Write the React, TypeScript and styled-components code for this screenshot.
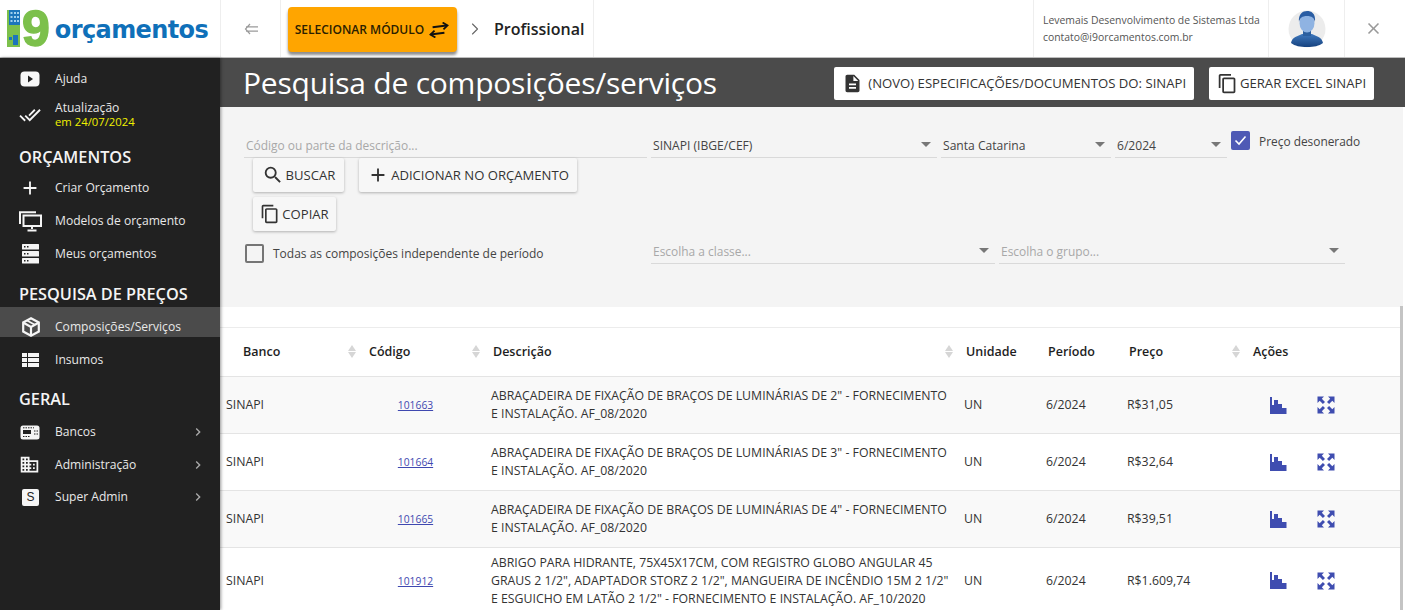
import styled, { createGlobalStyle } from 'styled-components'
import {
  MdAdd,
  MdChevronRight,
  MdClose,
  MdContentCopy,
  MdDescription,
  MdDomain,
  MdDoneAll,
  MdSearch,
} from 'react-icons/md'
import { ChevronRight } from 'lucide-react'

const GlobalStyle = createGlobalStyle`
  html, body {
    margin: 0;
    padding: 0;
    height: 100%;
    overflow: hidden;
    background: #fff;
    font-family: "Open Sans", "Noto Sans", sans-serif;
    color: #222;
  }
  * { box-sizing: border-box; }
`

const Page = styled.div`
  width: 1405px;
  height: 610px;
  display: flex;
  flex-direction: column;
  overflow: hidden;
`

/* topo */
const Header = styled.header`
  height: 58px;
  flex: none;
  display: flex;
  background: #fff;
  border-bottom: 1px solid #bdbdbd;
`
const LogoBox = styled.div`
  width: 221px;
  flex: none;
  display: flex;
  align-items: center;
  padding-left: 7px;
  border-right: 1px solid #eee;
  overflow: hidden;
`
const LogoNine = styled.span`
  font-family: 'Liberation Sans', sans-serif;
  font-weight: 700;
  font-size: 50px;
  line-height: 40px;
  color: #7cc04b;
  margin-left: 2px;
  -webkit-text-stroke: 1.5px #7cc04b;
`
const LogoText = styled.span`
  font-family: 'DejaVu Sans', sans-serif;
  font-weight: 700;
  font-size: 24px;
  letter-spacing: -0.6px;
  color: #0f70b9;
  margin: 2px 0 0 5px;
`
const BackBox = styled.div`
  width: 60px;
  height: 100%;
  flex: none;
  display: flex;
  align-items: center;
  justify-content: center;
  border-right: 1px solid #eee;
`
const ModuleButton = styled.div`
  width: 169px;
  height: 45px;
  margin: 7px 0 0 7px;
  flex: none;
  display: flex;
  align-items: center;
  justify-content: center;
  gap: 4px;
  background: #ffa500;
  border-radius: 4px;
  box-shadow: 0 3px 3px rgba(0, 0, 0, 0.45);
  font-size: 12px;
  font-weight: 600;
  color: #2a2000;
  white-space: nowrap;
`
const Crumb = styled.div`
  display: flex;
  align-items: center;
  height: 100%;
  width: 137px;
  flex: none;
  padding-left: 8px;
  gap: 9px;
  border-right: 1px solid #eee;
  color: #666;
  font-size: 16px;
  font-weight: 600;
`
const CrumbLabel = styled.span`
  color: #222;
`
const HeaderSpacer = styled.div`
  flex: 1;
`
const UserBox = styled.div`
  width: 236px;
  flex: none;
  display: flex;
  flex-direction: column;
  justify-content: center;
  gap: 3px;
  padding: 0 0 1px 9px;
  border-left: 1px solid #eee;
  border-right: 1px solid #eee;
  font-size: 10.4px;
  line-height: 14px;
  color: #555;
  white-space: nowrap;
`
const AvatarBox = styled.div`
  width: 76px;
  flex: none;
  display: flex;
  align-items: center;
  justify-content: center;
  border-right: 1px solid #eee;
`
const CloseBox = styled.div`
  width: 60px;
  flex: none;
  display: flex;
  align-items: center;
  justify-content: center;
  color: #999;
  padding-right: 4px;
`

const Body = styled.div`
  flex: 1;
  display: flex;
  min-height: 0;
`

/* menu lateral */
const Sidebar = styled.nav`
  width: 220px;
  flex: none;
  background: #212121;
  color: #eee;
  padding-top: 8px;
  box-shadow: 1px 0 3px rgba(0, 0, 0, 0.4);
  position: relative;
  z-index: 1;
`
const SectionTitle = styled.div<{ $top: number }>`
  margin: ${(p) => p.$top}px 0 0 19px;
  height: 22px;
  line-height: 22px;
  font-size: 16.3px;
  font-weight: 600;
  color: #f4f4f4;
`
const MenuItem = styled.div<{ $active?: boolean; $h?: number; $top?: number; $textDrop?: number }>`
  height: ${(p) => p.$h ?? 30}px;
  margin-top: ${(p) => p.$top ?? 0}px;
  display: flex;
  align-items: center;
  padding: ${(p) => p.$textDrop ?? 0}px 0 0 19px;
  font-size: 12.1px;
  color: #e8e8e8;
  background: ${(p) => (p.$active ? '#4b4b4b' : 'transparent')};
`
const MenuIcon = styled.span`
  width: 36px;
  flex: none;
  display: flex;
  align-items: center;
  color: #f5f5f5;
`
const MenuLabel = styled.span`
  flex: 1;
  line-height: 14px;
  white-space: nowrap;
`
const MenuDate = styled.span`
  display: block;
  font-size: 11.3px;
  color: #f0f000;
`
const MenuArrow = styled.span`
  display: flex;
  color: #aaa;
  margin-right: 14px;
`
const SuperIcon = styled.span`
  width: 17px;
  height: 17px;
  margin-left: 3px;
  background: #f5f5f5;
  color: #212121;
  border-radius: 2px;
  display: flex;
  align-items: center;
  justify-content: center;
  font-family: 'Liberation Sans', sans-serif;
  font-size: 12px;
`

/* conteudo */
const Main = styled.main`
  flex: 1;
  min-width: 0;
  display: flex;
  flex-direction: column;
  position: relative;
`
const TitleBar = styled.div`
  height: 49px;
  flex: none;
  display: flex;
  align-items: center;
  background: #4b4b4b;
  padding: 0 31px 0 23px;
`
const Title = styled.h1`
  flex: 1;
  margin: 0;
  font-size: 30px;
  font-weight: 400;
  color: #fff;
  letter-spacing: -0.22px;
  white-space: nowrap;
`
const TitleButton = styled.div<{ $w: number }>`
  width: ${(p) => p.$w}px;
  height: 33px;
  margin-left: 15px;
  margin-top: 1px;
  display: flex;
  align-items: center;
  justify-content: center;
  gap: 2px;
  background: #fff;
  border-radius: 2px;
  font-size: 13.15px;
  color: #333;
  white-space: nowrap;
`
const Filters = styled.section`
  height: 200px;
  flex: none;
  background: #f4f4f4;
  padding: 24px 0 0 24px;
  margin-right: 2px;
  display: grid;
  grid-template-columns: 405px 1fr;
  grid-template-rows: 77px 1fr;
`
const FieldsRow = styled.div`
  grid-column: 1 / 3;
  display: flex;
`
const Field = styled.div<{ $w: number; $muted?: boolean; $gap?: number }>`
  width: ${(p) => p.$w}px;
  margin-right: ${(p) => p.$gap ?? 4}px;
  flex: none;
  height: 27px;
  display: flex;
  align-items: center;
  justify-content: space-between;
  padding: 3px 6px 0 2px;
  border-bottom: 1px solid #d9d9d9;
  font-size: ${(p) => (p.$muted ? 11.95 : 12.1)}px;
  color: ${(p) => (p.$muted ? '#a8a8a8' : '#444')};
  white-space: nowrap;
`
const Caret = styled.span`
  width: 0;
  height: 0;
  border-left: 5px solid transparent;
  border-right: 5px solid transparent;
  border-top: 5px solid #777;
  margin-top: -3px;
`
const CheckBox = styled.span<{ $on?: boolean }>`
  width: 19px;
  height: 19px;
  flex: none;
  display: flex;
  align-items: center;
  justify-content: center;
  border-radius: 2px;
  background: ${(p) => (p.$on ? '#4f5ab5' : 'transparent')};
  border: ${(p) => (p.$on ? 'none' : '2px solid #757575')};
  color: #fff;
`
const PriceCheck = styled.div`
  display: flex;
  gap: 9px;
  font-size: 11.9px;
  color: #444;
  height: 19px;
  line-height: 20px;
`
const ButtonArea = styled.div`
  position: absolute;
  top: 100px;
  left: 33px;
  display: flex;
  flex-wrap: wrap;
  width: 340px;
  gap: 5px 15px;
`
const ActionButton = styled.div<{ $w: number }>`
  width: ${(p) => p.$w}px;
  height: 34px;
  display: flex;
  align-items: center;
  justify-content: center;
  gap: 2px;
  background: #f7f7f7;
  border-radius: 2px;
  box-shadow: 0 1px 3px rgba(0, 0, 0, 0.28);
  font-size: 13.1px;
  color: #333;
  white-space: nowrap;
`
const AllPeriods = styled.div`
  position: absolute;
  top: 186px;
  left: 25px;
  display: flex;
  align-items: center;
  gap: 9px;
  font-size: 12px;
  color: #444;
`
const LowerFields = styled.div`
  grid-column: 2;
  display: flex;
  padding-top: 29px;
  margin-left: 2px;
`
const TableGap = styled.div`
  height: 20px;
  flex: none;
  background: #fff;
`
const Table = styled.table`
  width: 1180px;
  border-collapse: collapse;
  table-layout: fixed;
  font-size: 12.3px;
  color: #333;
`
const Scrollbar = styled.div`
  position: absolute;
  top: 248px;
  right: 2px;
  bottom: 0;
  width: 3px;
  background: #c4c4c4;
`
const Th = styled.th<{ $w: number }>`
  width: ${(p) => p.$w}px;
  height: 49px;
  padding: 0 8px 2px;
  text-align: left;
  font-size: 12.5px;
  font-weight: 600;
  color: #1e1e1e;
  border-top: 1px solid #ececec;
  border-bottom: 1px solid #e4e4e4;
`
const ThInner = styled.div<{ $pad?: number }>`
  display: flex;
  align-items: center;
  justify-content: space-between;
  padding-left: ${(p) => p.$pad ?? 0}px;
`
const Sort = styled.span`
  display: flex;
  flex-direction: column;
  gap: 1px;
  margin-right: -3px;
  &::before {
    content: '';
    border-left: 4px solid transparent;
    border-right: 4px solid transparent;
    border-bottom: 6px solid #d6d6d6;
  }
  &::after {
    content: '';
    border-left: 4px solid transparent;
    border-right: 4px solid transparent;
    border-top: 6px solid #d6d6d6;
  }
`
const Tr = styled.tr<{ $h: number; $alt: boolean }>`
  height: ${(p) => p.$h}px;
  background: ${(p) => (p.$alt ? '#f9f9f9' : '#fff')};
  border-bottom: 1px solid #e4e4e4;
`
const Td = styled.td<{ $left?: number; $right?: number; $center?: boolean }>`
  padding: 0 ${(p) => p.$right ?? 0}px 0 ${(p) => p.$left ?? 6}px;
  text-align: ${(p) => (p.$center ? 'center' : 'left')};
  line-height: 18px;
`
const CodeLink = styled.a`
  color: #3f48b0;
  font-size: 10.3px;
  text-decoration: underline;
`
const Actions = styled.div`
  display: flex;
  align-items: center;
  gap: 30px;
  padding-left: 24px;
`

const LogoMark = () => (
  <svg width="13" height="37" viewBox="0 0 13 37">
    <rect x="0" y="0" width="13" height="37" fill="#7cc04b" />
    <rect x="2" y="0" width="11" height="15" fill="#1b75bb" />
    <g fill="#9fd0ee">
      <rect x="3.500" y="2" width="2" height="2" />
      <rect x="7" y="2" width="2" height="2" />
      <rect x="10" y="2" width="2" height="2" />
      <rect x="3.500" y="6" width="2" height="2" />
      <rect x="7" y="6" width="2" height="2" />
      <rect x="10" y="6" width="2" height="2" />
      <rect x="3.500" y="10" width="2" height="2" />
      <rect x="7" y="10" width="2" height="2" />
      <rect x="10" y="10" width="2" height="2" />
    </g>
    <polygon points="0,15 2,15 13,24 13,34 7,34 7,26 2,26 2,34 0,34" fill="#7cc04b" />
    <rect x="6" y="25" width="5" height="10" fill="#1b75bb" />
    <rect x="2" y="27" width="3" height="3" fill="#1b75bb" />
  </svg>
)

const BackArrow = () => (
  <svg width="14" height="12" viewBox="0 0 14 12" fill="none" stroke="#9a9a9a" strokeWidth="1.2">
    <path d="M6 1 1.500 6 6 11M2 3.800h12M2 8.200h12" />
  </svg>
)

const SwapIcon = () => (
  <svg width="22" height="16" viewBox="0 0 22 16" fill="none" stroke="#111" strokeWidth="2">
    <g transform="rotate(-7 11 8)">
      <path d="M5 4.500h14" />
      <path d="M15.500 1 20 4.500 15.500 8" strokeWidth="1.8" />
      <path d="M2 11.500h14" />
      <path d="M6.500 8 2 11.500 6.500 15" strokeWidth="1.8" />
    </g>
  </svg>
)

const Avatar = () => (
  <svg width="38" height="38" viewBox="0 0 38 38">
    <defs>
      <linearGradient id="bust" x1="0" y1="0" x2="0" y2="1">
        <stop offset="0" stopColor="#3f78bd" />
        <stop offset="1" stopColor="#16427f" />
      </linearGradient>
    </defs>
    <circle cx="19" cy="19" r="18.500" fill="#ececec" />
    <path d="M3 33c1-6 7-7 11-9h10c4 2 10 3 11 9-4 3-9 4-16 4S7 36 3 33z" fill="url(#bust)" />
    <rect x="15" y="18" width="8" height="8" fill="#2c5f9f" />
    <ellipse cx="19" cy="13" rx="7.500" ry="9.500" fill="#8fb3e2" />
    <path d="M11 12C10 4 15 1 19 1s9 2 8 11c-1-4-3-6-8-6s-7 2-8 6z" fill="#2a5da3" />
  </svg>
)

const PlayIcon = () => (
  <svg width="20" height="16" viewBox="0 0 20 16" style={{ marginLeft: 1 }}>
    <rect x="0.500" y="0.500" width="19" height="15" rx="4" fill="#f7f7f7" />
    <polygon points="8,4.500 13,8 8,11.500" fill="#212121" />
  </svg>
)

const MonitorsIcon = () => (
  <svg width="23" height="21" viewBox="0 0 23 21" fill="none" stroke="#f5f5f5" strokeWidth="2">
    <path d="M1 13V1.200h16" />
    <path d="M4.500 15V4.500h17.500V15z" />
    <path d="M13 15v3" />
    <path d="M8.500 19.500h9" />
  </svg>
)

const StackIcon = () => (
  <svg width="17" height="20" viewBox="0 0 17 20" fill="#f5f5f5" style={{ marginLeft: 3 }}>
    <rect x="0" y="0" width="17" height="5.500" rx="0.500" />
    <rect x="0" y="7" width="17" height="5.500" rx="0.500" />
    <rect x="0" y="14" width="17" height="5.500" rx="0.500" />
    <g fill="#212121">
      <rect x="2" y="2" width="1.500" height="1.500" />
      <rect x="5" y="2" width="1.500" height="1.500" />
      <rect x="2" y="9" width="1.500" height="1.500" />
      <rect x="5" y="9" width="1.500" height="1.500" />
      <rect x="2" y="16" width="1.500" height="1.500" />
      <rect x="5" y="16" width="1.500" height="1.500" />
    </g>
  </svg>
)

const CubeIcon = () => (
  <svg width="18" height="20" viewBox="0 0 18 20" fill="none" stroke="#f5f5f5" strokeWidth="2.2" style={{ marginLeft: 3 }}>
    <path d="M9 1.300 16.800 5.500v9L9 18.700 1.200 14.500v-9z" />
    <path d="M1.500 5.700 9 10l7.500-4.300M9 10v8.500" />
    <path d="M5 3.500 12.800 7.800" strokeWidth="1.600" />
  </svg>
)

const RowsIcon = () => (
  <svg width="17" height="14" viewBox="0 0 17 14" fill="#f5f5f5" style={{ marginLeft: 3 }}>
    <rect x="0" y="0" width="17" height="4" />
    <rect x="0" y="5" width="17" height="4" />
    <rect x="0" y="10" width="17" height="4" />
    <rect x="5" y="0" width="1" height="14" fill="#212121" />
  </svg>
)

const BankIcon = () => (
  <svg width="20" height="15" viewBox="0 0 20 15" style={{ marginLeft: 1 }}>
    <rect x="0.500" y="0.500" width="19" height="14" rx="2.500" fill="#f5f5f5" />
    <rect x="3" y="5" width="8" height="4" fill="#212121" />
    <path d="M3 2.800h11M14 6h4M14 9h4M3 11.500h7" stroke="#212121" strokeWidth="1" strokeDasharray="1.500 1" />
  </svg>
)

const StepChart = () => (
  <svg width="18" height="17" viewBox="0 0 18 17">
    <polygon points="1,0 3,0 3,8 5,8 5,3 9,3 9,7 13,7 13,11 17.500,11 17.500,17 1,17" fill="#3f4db0" />
  </svg>
)

const ExpandArrow = ({ rotate }: { rotate: number }) => (
  <path transform={`rotate(${rotate} 9 9)`} d="M0.500 0.500h6.500L4.800 2.700l3.200 3.200-2.100 2.100-3.200-3.200L0.500 7z" />
)

const ExpandIcon = () => (
  <svg width="18" height="18" viewBox="0 0 18 18" fill="#3f4db0">
    <ExpandArrow rotate={0} />
    <ExpandArrow rotate={90} />
    <ExpandArrow rotate={180} />
    <ExpandArrow rotate={270} />
  </svg>
)

type Row = {
  code: string
  desc: string[]
  price: string
  height: number
  alt: boolean
}

const rows: Row[] = [
  {
    code: '101663',
    desc: ['ABRAÇADEIRA DE FIXAÇÃO DE BRAÇOS DE LUMINÁRIAS DE 2" - FORNECIMENTO', 'E INSTALAÇÃO. AF_08/2020'],
    price: 'R$31,05',
    height: 57,
    alt: true,
  },
  {
    code: '101664',
    desc: ['ABRAÇADEIRA DE FIXAÇÃO DE BRAÇOS DE LUMINÁRIAS DE 3" - FORNECIMENTO', 'E INSTALAÇÃO. AF_08/2020'],
    price: 'R$32,64',
    height: 57,
    alt: false,
  },
  {
    code: '101665',
    desc: ['ABRAÇADEIRA DE FIXAÇÃO DE BRAÇOS DE LUMINÁRIAS DE 4" - FORNECIMENTO', 'E INSTALAÇÃO. AF_08/2020'],
    price: 'R$39,51',
    height: 57,
    alt: true,
  },
  {
    code: '101912',
    desc: [
      'ABRIGO PARA HIDRANTE, 75X45X17CM, COM REGISTRO GLOBO ANGULAR 45',
      'GRAUS 2 1/2", ADAPTADOR STORZ 2 1/2", MANGUEIRA DE INCÊNDIO 15M 2 1/2"',
      'E ESGUICHO EM LATÃO 2 1/2" - FORNECIMENTO E INSTALAÇÃO. AF_10/2020',
    ],
    price: 'R$1.609,74',
    height: 66,
    alt: false,
  },
]

const columns = [
  { label: 'Banco', w: 141, pad: 15 },
  { label: 'Código', w: 124, pad: 0 },
  { label: 'Descrição', w: 473, pad: 0 },
  { label: 'Unidade', w: 82, pad: 0, noSort: true },
  { label: 'Período', w: 81, pad: 0, noSort: true },
  { label: 'Preço', w: 124, pad: 0 },
  { label: 'Ações', w: 155, pad: 0, noSort: true },
]

const App = () => {
  return (
    <Page>
      <GlobalStyle />
      <Header>
        <LogoBox>
          <LogoMark />
          <LogoNine>9</LogoNine>
          <LogoText>orçamentos</LogoText>
        </LogoBox>
        <BackBox>
          <BackArrow />
        </BackBox>
        <ModuleButton>
          SELECIONAR MÓDULO
          <SwapIcon />
        </ModuleButton>
        <Crumb>
          <ChevronRight size={20} strokeWidth={1.3} />
          <CrumbLabel>Profissional</CrumbLabel>
        </Crumb>
        <HeaderSpacer />
        <UserBox>
          <span>Levemais Desenvolvimento de Sistemas Ltda</span>
          <span>contato@i9orcamentos.com.br</span>
        </UserBox>
        <AvatarBox>
          <Avatar />
        </AvatarBox>
        <CloseBox>
          <MdClose size={19} />
        </CloseBox>
      </Header>
      <Body>
        <Sidebar>
          <MenuItem $h={25}>
            <MenuIcon><PlayIcon /></MenuIcon>
            <MenuLabel>Ajuda</MenuLabel>
          </MenuItem>
          <MenuItem $h={32} $top={8}>
            <MenuIcon><MdDoneAll size={22} /></MenuIcon>
            <MenuLabel>
              Atualização
              <MenuDate>em 24/07/2024</MenuDate>
            </MenuLabel>
          </MenuItem>
          <SectionTitle $top={15}>ORÇAMENTOS</SectionTitle>
          <MenuItem $h={32} $top={4}>
            <MenuIcon><MdAdd size={22} /></MenuIcon>
            <MenuLabel>Criar Orçamento</MenuLabel>
          </MenuItem>
          <MenuItem $h={34}>
            <MenuIcon><MonitorsIcon /></MenuIcon>
            <MenuLabel>Modelos de orçamento</MenuLabel>
          </MenuItem>
          <MenuItem $h={32}>
            <MenuIcon><StackIcon /></MenuIcon>
            <MenuLabel>Meus orçamentos</MenuLabel>
          </MenuItem>
          <SectionTitle $top={13}>PESQUISA DE PREÇOS</SectionTitle>
          <MenuItem $active $h={30} $top={2} $textDrop={10}>
            <MenuIcon><CubeIcon /></MenuIcon>
            <MenuLabel>Composições/Serviços</MenuLabel>
          </MenuItem>
          <MenuItem $h={34} $top={6}>
            <MenuIcon><RowsIcon /></MenuIcon>
            <MenuLabel>Insumos</MenuLabel>
          </MenuItem>
          <SectionTitle $top={11}>GERAL</SectionTitle>
          <MenuItem $h={32} $top={6}>
            <MenuIcon><BankIcon /></MenuIcon>
            <MenuLabel>Bancos</MenuLabel>
            <MenuArrow><MdChevronRight size={16} /></MenuArrow>
          </MenuItem>
          <MenuItem $h={33}>
            <MenuIcon><MdDomain size={21} /></MenuIcon>
            <MenuLabel>Administração</MenuLabel>
            <MenuArrow><MdChevronRight size={16} /></MenuArrow>
          </MenuItem>
          <MenuItem $h={32}>
            <MenuIcon><SuperIcon>S</SuperIcon></MenuIcon>
            <MenuLabel>Super Admin</MenuLabel>
            <MenuArrow><MdChevronRight size={16} /></MenuArrow>
          </MenuItem>
        </Sidebar>
        <Main>
          <TitleBar>
            <Title>Pesquisa de composições/serviços</Title>
            <TitleButton $w={360}>
              <MdDescription size={21} />
              &nbsp;(NOVO) ESPECIFICAÇÕES/DOCUMENTOS DO: SINAPI
            </TitleButton>
            <TitleButton $w={165}>
              <MdContentCopy size={21} />
              GERAR EXCEL SINAPI
            </TitleButton>
          </TitleBar>
          <Filters>
            <FieldsRow>
              <Field $w={403} $muted>Código ou parte da descrição...</Field>
              <Field $w={286}>SINAPI (IBGE/CEF)<Caret /></Field>
              <Field $w={170}>Santa Catarina<Caret /></Field>
              <Field $w={112}>6/2024<Caret /></Field>
              <PriceCheck>
                <CheckBox $on>
                  <svg width="13" height="11" viewBox="0 0 13 11" fill="none" stroke="#fff" strokeWidth="1.6">
                    <path d="M1.500 5.500 5 9l6.500-7.500" />
                  </svg>
                </CheckBox>
                Preço desonerado
              </PriceCheck>
            </FieldsRow>
            <LowerFields>
              <Field $w={344} $muted>Escolha a classe...<Caret /></Field>
              <Field $w={346} $muted>Escolha o grupo...<Caret /></Field>
            </LowerFields>
          </Filters>
          <ButtonArea>
            <ActionButton $w={91}><MdSearch size={22} />BUSCAR</ActionButton>
            <ActionButton $w={218}><MdAdd size={22} />ADICIONAR NO ORÇAMENTO</ActionButton>
            <ActionButton $w={83}><MdContentCopy size={20} />COPIAR</ActionButton>
          </ButtonArea>
          <AllPeriods>
            <CheckBox />
            Todas as composições independente de período
          </AllPeriods>
          <TableGap />
          <Table>
            <thead>
              <tr>
                {columns.map((c) => (
                  <Th key={c.label} $w={c.w}>
                    <ThInner $pad={c.pad}>
                      {c.label}
                      {!c.noSort && <Sort />}
                    </ThInner>
                  </Th>
                ))}
              </tr>
            </thead>
            <tbody>
              {rows.map((r) => (
                <Tr key={r.code} $h={r.height} $alt={r.alt}>
                  <Td>SINAPI</Td>
                  <Td $center $left={0} $right={15}><CodeLink>{r.code}</CodeLink></Td>
                  <Td>
                    {r.desc.map((line) => (
                      <div key={line}>{line}</div>
                    ))}
                  </Td>
                  <Td>UN</Td>
                  <Td>6/2024</Td>
                  <Td>{r.price}</Td>
                  <Td $left={0}>
                    <Actions>
                      <StepChart />
                      <ExpandIcon />
                    </Actions>
                  </Td>
                </Tr>
              ))}
            </tbody>
          </Table>
          <Scrollbar />
        </Main>
      </Body>
    </Page>
  )
}

export default App
